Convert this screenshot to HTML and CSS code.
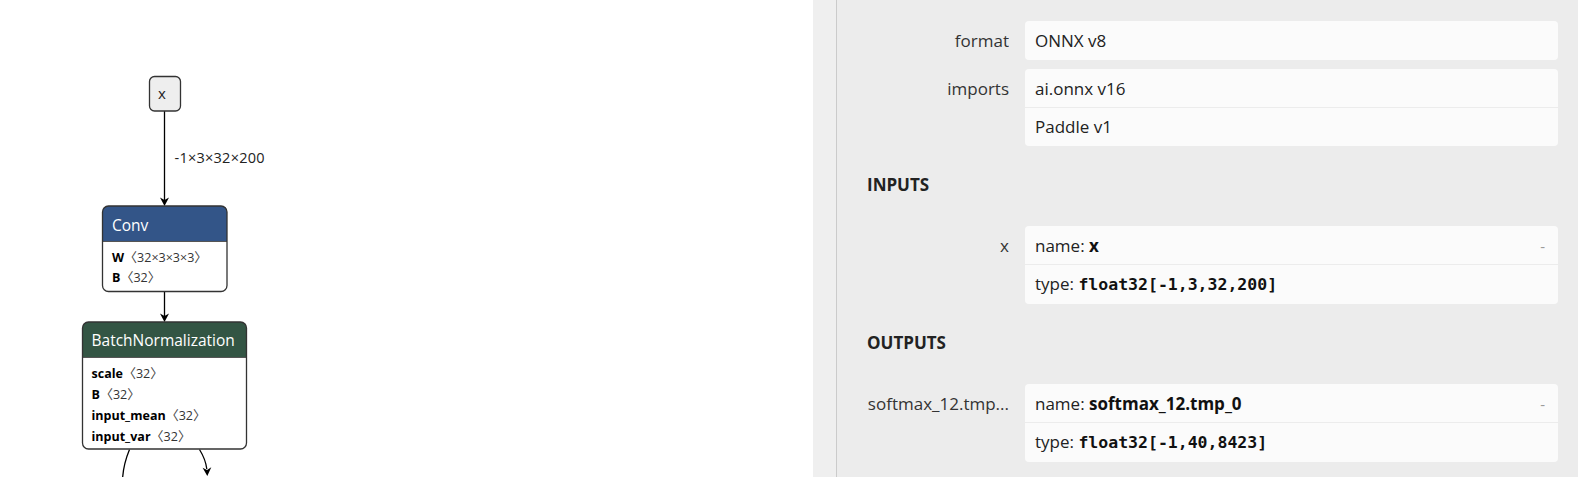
FILE: index.html
```html
<!DOCTYPE html>
<html>
<head>
<meta charset="utf-8">
<title>Model properties</title>
<link rel="stylesheet" href="styles.css">
</head>
<body>
<div class="app">
  <div class="graph">
    <svg class="graph-svg" width="813" height="477" viewBox="0 0 813 477" xmlns="http://www.w3.org/2000/svg">
      <!-- edges -->
      <g class="edge">
        <path class="edge-line" d="M164.5,111 V200"/>
        <path class="edge-head" d="M164.5,206 L160,197.5 L164.5,200 L169,197.5 Z"/>
        <text class="edge-label" x="174.5" y="162.5">-1×3×32×200</text>
      </g>
      <g class="edge">
        <path class="edge-line" d="M164.5,292 V316"/>
        <path class="edge-head" d="M164.5,322 L160,313.5 L164.5,316 L169,313.5 Z"/>
      </g>
      <g class="edge">
        <path class="edge-line" d="M129.5,449.5 C126,458 123,467 122.5,480"/>
        <path class="edge-line" d="M199.5,449.5 C203.5,456 206,462 206.8,469"/>
        <path class="edge-head" d="M207.3,476 L202.6,467.7 L207,470 L211.3,467.2 Z"/>
      </g>

      <!-- input node -->
      <g class="node">
        <rect class="node-input" x="149.5" y="76.5" width="31" height="34.5" rx="5"/>
        <text class="node-input-text" x="158" y="98.5">x</text>
      </g>

      <!-- Conv -->
      <g class="node">
        <rect class="node-body" x="102.5" y="206" width="124.5" height="85.5" rx="6"/>
        <path class="hdr-layer" d="M102.5,241 V212 Q102.5,206 108.5,206 H221 Q227,206 227,212 V241 Z"/>
        <path class="node-sep" d="M102.5,241.5 H227"/>
        <rect class="node-outline" x="102.5" y="206" width="124.5" height="85.5" rx="6"/>
        <text class="node-title" x="112" y="231">Conv</text>
        <text class="node-attr" x="112" y="261.5"><tspan class="attr-name">W</tspan><tspan class="br">〈</tspan>32×3×3×3<tspan class="br">〉</tspan></text>
        <text class="node-attr" x="112" y="282"><tspan class="attr-name">B</tspan><tspan class="br">〈</tspan>32<tspan class="br">〉</tspan></text>
      </g>

      <!-- BatchNormalization -->
      <g class="node">
        <rect class="node-body" x="82.5" y="322" width="164" height="127" rx="6"/>
        <path class="hdr-norm" d="M82.5,357 V328 Q82.5,322 88.5,322 H240.5 Q246.5,322 246.5,328 V357 Z"/>
        <path class="node-sep" d="M82.5,357.5 H246.5"/>
        <rect class="node-outline" x="82.5" y="322" width="164" height="127" rx="6"/>
        <text class="node-title" x="91.5" y="346">BatchNormalization</text>
        <text class="node-attr" x="91.5" y="377.5"><tspan class="attr-name">scale</tspan><tspan class="br">〈</tspan>32<tspan class="br">〉</tspan></text>
        <text class="node-attr" x="91.5" y="398.5"><tspan class="attr-name">B</tspan><tspan class="br">〈</tspan>32<tspan class="br">〉</tspan></text>
        <text class="node-attr" x="91.5" y="419.5"><tspan class="attr-name">input_mean</tspan><tspan class="br">〈</tspan>32<tspan class="br">〉</tspan></text>
        <text class="node-attr" x="91.5" y="440.5"><tspan class="attr-name">input_var</tspan><tspan class="br">〈</tspan>32<tspan class="br">〉</tspan></text>
      </g>
    </svg>
  </div>

  <aside class="sidebar">
    <div class="sidebar-strip"></div>
    <div class="sidebar-content">
      <div class="prop">
        <div class="prop-name">format</div>
        <div class="prop-value">
          <div class="row">ONNX v8</div>
        </div>
      </div>
      <div class="prop">
        <div class="prop-name">imports</div>
        <div class="prop-value">
          <div class="row">ai.onnx v16</div>
          <div class="row">Paddle v1</div>
        </div>
      </div>

      <h2 class="section">INPUTS</h2>
      <div class="prop">
        <div class="prop-name">x</div>
        <div class="prop-value">
          <div class="row"><span>name: <b>x</b></span><span class="expander">-</span></div>
          <div class="row"><span>type: <code>float32[-1,3,32,200]</code></span></div>
        </div>
      </div>

      <h2 class="section">OUTPUTS</h2>
      <div class="prop">
        <div class="prop-name" title="softmax_12.tmp_0">softmax_12.tmp...</div>
        <div class="prop-value">
          <div class="row"><span>name: <b>softmax_12.tmp_0</b></span><span class="expander">-</span></div>
          <div class="row"><span>type: <code>float32[-1,40,8423]</code></span></div>
        </div>
      </div>
    </div>
  </aside>
</div>
</body>
</html>
```

FILE: styles.css
```css
* {
  box-sizing: border-box;
}

html,
body {
  margin: 0;
  padding: 0;
}

body {
  font-family: "Open Sans", "Noto Sans", "Noto Sans CJK SC", sans-serif;
  background: #ffffff;
  overflow: hidden;
}

.app {
  display: flex;
  width: 1578px;
  height: 477px;
}

/* ---------- graph ---------- */
.graph {
  flex: 0 0 813px;
  background: #ffffff;
  overflow: hidden;
}

.graph-svg {
  display: block;
  font-family: "Open Sans", "Noto Sans", "Noto Sans CJK SC", sans-serif;
}

.edge-line {
  fill: none;
  stroke: #000000;
  stroke-width: 1.3;
}

.edge-head {
  fill: #000000;
  stroke: none;
}

.edge-label {
  font-size: 14.5px;
  letter-spacing: 0.25px;
  fill: #222222;
}

.node-input {
  fill: #eeeeee;
  stroke: #333333;
  stroke-width: 1.3;
}

.node-input-text {
  font-size: 15px;
  fill: #222222;
}

.node-body {
  fill: #ffffff;
  stroke: none;
}

.node-outline {
  fill: none;
  stroke: #333333;
  stroke-width: 1.3;
}

.node-sep {
  fill: none;
  stroke: #555555;
  stroke-width: 1;
}

.hdr-layer {
  fill: #335588;
}

.hdr-norm {
  fill: #335544;
}

.node-title {
  font-size: 15.5px;
  fill: #ffffff;
}

.node-attr {
  font-size: 12.5px;
  fill: #333333;
}

.attr-name {
  font-weight: 700;
  fill: #000000;
}

.br {
  font-family: "Noto Sans CJK SC", "Noto Sans CJK JP", sans-serif;
  font-size: 13px;
  fill: #444444;
}

/* ---------- sidebar ---------- */
.sidebar {
  flex: 1;
  display: flex;
  background: #ececec;
  min-width: 0;
}

.sidebar-strip {
  flex: 0 0 24px;
  background: #efefef;
  border-right: 1px solid #cbcbcb;
}

.sidebar-content {
  flex: 1;
  min-width: 0;
  padding: 21px 20px 0 30px;
  color: #222222;
  font-size: 17px;
  line-height: 22px;
}

.prop {
  display: flex;
  gap: 16px;
  margin-bottom: 9px;
}

.prop-name {
  flex: 0 0 142px;
  text-align: right;
  padding-top: 9px;
  color: #333333;
  white-space: nowrap;
  overflow: hidden;
}

.prop-value {
  flex: 1;
  min-width: 0;
  background: #fbfbfb;
  border-radius: 4px;
  padding: 1px 0;
}

.row {
  display: flex;
  justify-content: space-between;
  align-items: center;
  padding: 8px 13px 7px 10px;
  white-space: nowrap;
}

.row + .row {
  border-top: 1px solid #ececec;
}

.row b {
  font-weight: 700;
  color: #111111;
}

.row code {
  font-family: "DejaVu Sans Mono", "Liberation Mono", monospace;
  font-weight: 700;
  font-size: 16.5px;
  color: #111111;
}

.expander {
  color: #9a9a9a;
  font-size: 15px;
  line-height: 22px;
}

.section {
  margin: 28px 0 30px;
  font-size: 17px;
  line-height: 22px;
  font-weight: 700;
  color: #222222;
}
```
